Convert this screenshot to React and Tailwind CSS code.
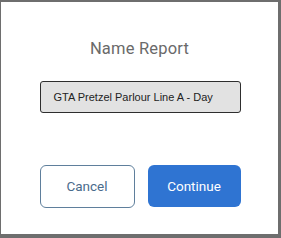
import React from "react";

const App = () => {
  return (
    <div className="w-[281px] h-[238px] bg-[#6e6e6e] pt-[2px] pl-[1px] pr-[3px] pb-[4px]">
      <div className="w-full h-full bg-white flex flex-col items-center">
        {/* Title */}
        <div
          className="mt-[36px] text-[16.5px] leading-[22px] text-[#6a6a6a] tracking-[0.2px]"
          style={{ fontFamily: "Roboto, sans-serif" }}
        >
          Name Report
        </div>

        {/* Report name field */}
        <div className="mt-[21px] w-[201px] h-[32px] ml-[1px] bg-[#e2e2e2] border border-[#2e2e2e] rounded-[3px] flex items-center pl-[13px]">
          <span
            className="text-[11px] leading-[14px] text-[#222222] whitespace-nowrap"
            style={{ fontFamily: "'Liberation Sans', Arial, sans-serif" }}
          >
            GTA Pretzel Parlour Line A - Day
          </span>
        </div>

        {/* Actions */}
        <div
          className="mt-[52px] flex gap-[13px] ml-[1px]"
          style={{ fontFamily: "Roboto, sans-serif" }}
        >
          <button className="w-[95px] h-[43px] rounded-[6px] border border-[#5f7f9c] bg-white text-[13.5px] text-[#4a6b8c]">
            Cancel
          </button>
          <button className="w-[93px] h-[42px] rounded-[6px] bg-[#2f74d2] text-[13.5px] text-white">
            Continue
          </button>
        </div>
      </div>
    </div>
  );
};

export default App;
